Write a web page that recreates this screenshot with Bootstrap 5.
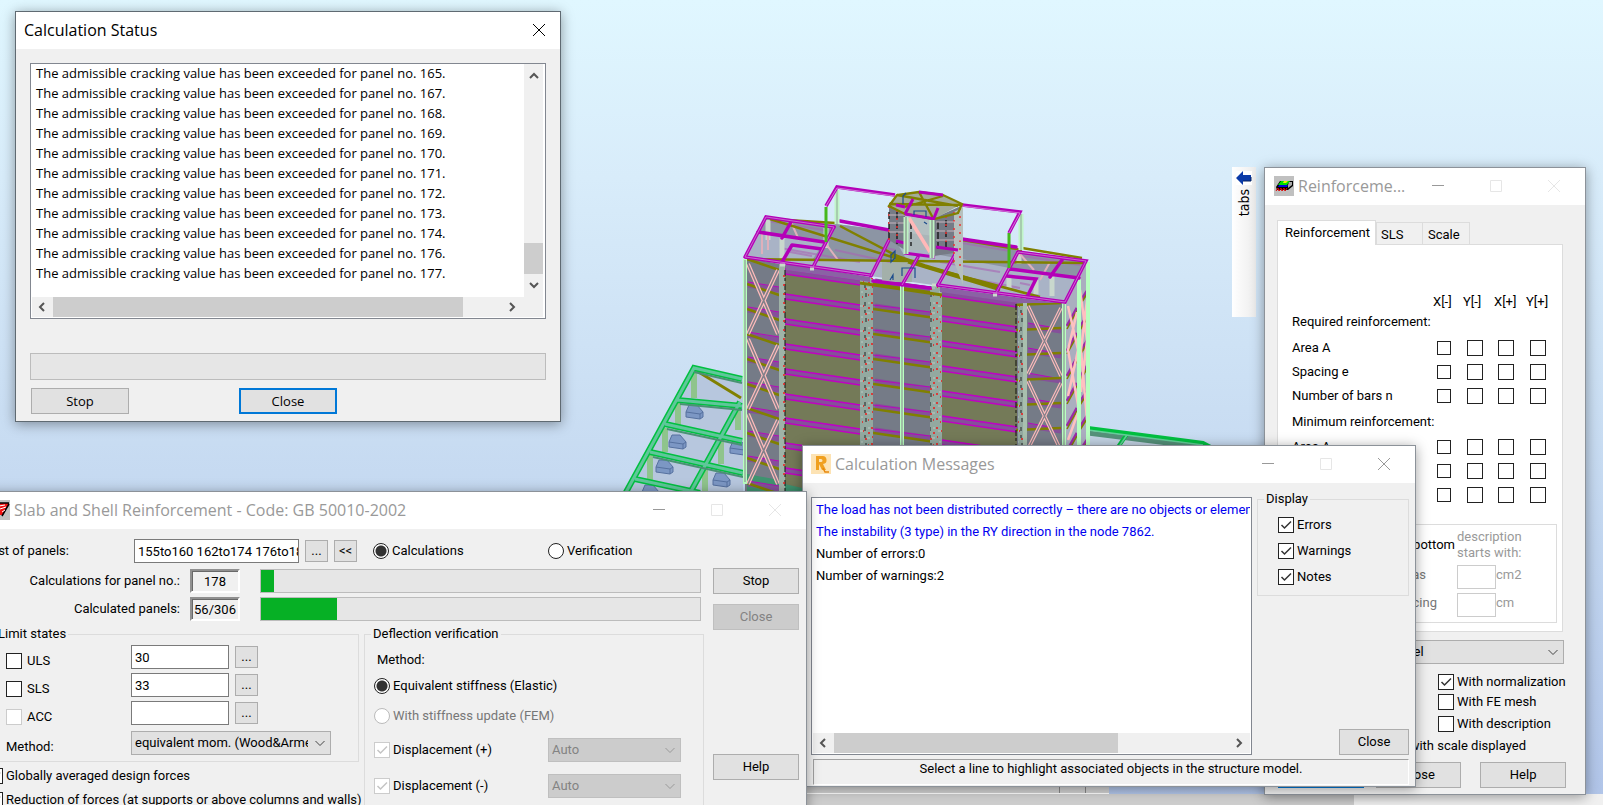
<!DOCTYPE html>
<html lang="en">
<head>
<meta charset="utf-8">
<meta name="viewport" content="width=device-width, initial-scale=1">
<title>Slab and Shell Reinforcement</title>
<link href="https://cdn.jsdelivr.net/npm/bootstrap@5.3.0/dist/css/bootstrap.min.css" rel="stylesheet">
<script src="https://cdn.jsdelivr.net/npm/bootstrap@5.3.0/dist/js/bootstrap.bundle.min.js"></script>
<style>
  :root { --face: #f0f0f0; --btn: #e1e1e1; --edge: #adadad; --soft: #dcdcdc; }
  body { font: 13px/16px Roboto, "Liberation Sans", sans-serif; color: #000; }
  .desktop { height: 100vh; min-height: 600px; background: linear-gradient(#e0f7ff 0%, #d8ecfa 22%, #c8dcf2 55%, #b0c4e8 100%); }
  .model { left: 610px; top: 170px; width: 640px; height: 330px; }

  .win { background: var(--face); border: 1px solid #8c9299; box-shadow: 0 2px 12px rgba(0,0,0,.38); }
  .win-title { height: 37px; padding-bottom: 2px; background: #fff; color: #999; font: 16px/20px "Open Sans", "Noto Sans", sans-serif; }
  .win-title .caption { flex: 1 1 0; min-width: 0; }
  .win-btn { width: 12px; height: 12px; padding: 0; border: 0; background: none; color: #999; display: block; }
  .win-btn svg { display: block; }
  .win-btn:disabled { color: #e6e6e6; }
  .win-btns { gap: 46px; padding-right: 1px; }

  .w-status { left: 15px; top: 11px; width: 546px; font-family: "Open Sans", "Noto Sans", sans-serif; border-color: #5f6a72; }
  .w-status .win-title, .w-status .win-btn { color: #000; }
  .w-status .client { padding: 14px 14px 7px; }
  .w-slab { left: -15px; top: 491px; width: 822px; height: 340px; z-index: 3; }
  .w-msg { left: 802px; top: 445px; width: 614px; height: 342px; z-index: 2; }
  .w-reinf { left: 1264px; top: 167px; width: 322px; height: 628px; z-index: 1; }

  .btn-w { --bs-btn-padding-x: 0; --bs-btn-padding-y: 0; --bs-btn-font-size: 13px; --bs-btn-line-height: 16px;
    --bs-btn-border-radius: 0; --bs-btn-bg: var(--btn); --bs-btn-border-color: var(--edge); --bs-btn-color: #000;
    --bs-btn-hover-bg: #e5f1fb; --bs-btn-hover-border-color: #0078d7; --bs-btn-hover-color: #000;
    --bs-btn-disabled-bg: #ccc; --bs-btn-disabled-border-color: #bfbfbf; --bs-btn-disabled-color: #838383; --bs-btn-disabled-opacity: 1;
    font-family: inherit; height: 26px; }
  .btn-default { border: 2px solid #0078d7; }
  .btn-86 { width: 86px; }
  .btn-98 { width: 98px; }
  .btn-70 { width: 70px; }
  .btn-dots { width: 23px; height: 22px; }

  .sheet { background: #fff; border: 1px solid #828790; }
  .lines { list-style: none; margin: 0; padding: 0; white-space: nowrap; overflow: hidden; }
  .sb { background: var(--face); color: #555; }
  .sb svg { display: block; flex: none; }
  .sb-thumb { background: #cdcdcd; }

  .bar { background: #e6e6e6; border: 1px solid #bcbcbc; border-radius: 0; height: 24px; }
  .bar .progress-bar { background: #06b025; }
  .tall { height: 27px; }

  .form-check-input.tick, .form-check-input.dot { float: none; margin: 0; flex: none; width: 16px; height: 16px; border: 1px solid #222; background-color: #fff; opacity: 1; background-size: 14px 14px; }
  .form-check-input.tick { border-radius: 0; }
  .form-check-input.tick.sm { width: 14px; height: 14px; }
  .form-check-input.tick:checked { background-image: url("data:image/svg+xml,%3Csvg xmlns='http://www.w3.org/2000/svg' viewBox='0 0 14 14'%3E%3Cpath d='M2.5 7l3 3L12 3.500' fill='none' stroke='%23333' stroke-width='1.500'/%3E%3C/svg%3E"); }
  .form-check-input.tick:disabled { border-color: #ccc; opacity: 1; }
  .form-check-input.tick:checked:disabled { background-image: url("data:image/svg+xml,%3Csvg xmlns='http://www.w3.org/2000/svg' viewBox='0 0 14 14'%3E%3Cpath d='M2.5 7l3 3L12 3.500' fill='none' stroke='%23c4c4c4' stroke-width='1.500'/%3E%3C/svg%3E"); }
  .form-check-input.dot:checked { background-image: radial-gradient(circle, #333 5px, transparent 6px); }
  .form-check-input.dot:disabled { border-color: #bbb; }
  .opt { display: flex; align-items: center; gap: 3px; white-space: nowrap; }
  .opt label { opacity: 1 !important; }

  .fld { border: 1px solid #7a7a7a; border-radius: 0; padding: 0 0 0 3px; height: 24px; font: inherit; color: #000; background: #fff; min-width: 0; }
  .fld:disabled { border-color: #ccc; background: #fff; }
  .pick { border: 1px solid var(--edge); border-radius: 0; height: 24px; padding: 0 22px 0 3px; font: inherit; color: #000; background-color: var(--btn); background-size: 10px 10px; background-position: right 5px center; text-overflow: clip; overflow: hidden;
    background-image: url("data:image/svg+xml,%3Csvg xmlns='http://www.w3.org/2000/svg' viewBox='0 0 10 10'%3E%3Cpath d='M.5 3L5 7.500 9.500 3' fill='none' stroke='%23444'/%3E%3C/svg%3E"); }
  .pick:disabled { background-color: #ccc; color: #838383; border-color: #bfbfbf; opacity: 1;
    background-image: url("data:image/svg+xml,%3Csvg xmlns='http://www.w3.org/2000/svg' viewBox='0 0 10 10'%3E%3Cpath d='M.5 3L5 7.500 9.500 3' fill='none' stroke='%23999'/%3E%3C/svg%3E"); }
  .sunk { width: 50px; height: 24px; border: 2px solid; border-color: #909090 #fff #fff #909090; box-shadow: inset 1px 1px #696969; text-align: center; line-height: 22px; }

  .grp { border: 1px solid var(--soft); margin: 0; padding: 0; min-width: 0; }
  .grp legend { float: none; width: auto; margin: 0; padding: 0 2px; font: inherit; line-height: 16px; }
  .limit { width: 368px; margin-left: 5px; height: 136px; }
  .defl { width: 340px; height: 190px; }

  .nav-w { border: 0; margin-left: 12px; align-items: flex-end; }
  .nav-w .nav-link { border: 1px solid var(--soft); border-bottom: 0; border-radius: 0; padding: 4px 0 0 4px; height: 22px; width: 47px; margin: 0; color: #000; background: var(--face); line-height: 16px; text-align: left; }
  .nav-w .nav-link + .nav-link + .nav-link { border-left: 0; padding-left: 5px; }
  .nav-w .nav-link.active { width: 99px; height: 25px; padding-left: 7px; padding-top: 4px; background: #fff; margin-bottom: -1px; position: relative; }
  .pane { width: 286px; height: 388px; margin-left: 12px; background: #fff; border: 1px solid var(--soft); }
  .areas { table-layout: fixed; width: 268px; margin-left: 14px; border-collapse: collapse; }
  .areas th, .areas td { font-weight: 400; padding: 0; vertical-align: middle; white-space: nowrap; text-align: left; height: 24px; }
  .areas .tick { display: block; }
  .desc { width: 276px; height: 99px; margin-left: 3px; border: 1px solid var(--soft); color: #999; }
  .desc-grid { display: grid; grid-template-columns: 175px 39px 1fr; align-items: center; }
  .dim { color: #777; }

  .strip { left: 1232px; top: 167px; width: 24px; height: 150px; background: linear-gradient(90deg, #fff, #ececec); }
  .strip a { writing-mode: vertical-rl; transform: rotate(180deg); color: #000; text-decoration: none; font: 14px/20px "DejaVu Sans Condensed", Roboto, sans-serif; }
  .strip svg { display: block; background: #fff; }

  .footbar { height: 11px; background: #f0f0f0; }
  .footbar .sb-thumb { width: 1354px; }
  .views { left: 0; bottom: 11px; width: 1109px; height: 22px; background: #d2d2d2; border-bottom: 1px solid #fff; padding-left: 808px; }
  .views span { width: 252px; border-right: 1px solid #888; line-height: 16px; }
  .views i { width: 26px; border-right: 1px solid #888; }
</style>
</head>
<body>
<main class="desktop position-relative overflow-hidden">

  <!-- structure model -->
  <svg class="model position-absolute" viewBox="610 170 640 330" aria-label="Structure model view">
    <defs>
      <pattern id="mesh" width="13" height="25" patternUnits="userSpaceOnUse">
        <rect width="13" height="25" fill="#93a9a0"/>
        <path d="M0 3h2M5 6h1M10 8h2M1 12h1M7 14h2M0 19h2M4 22h1M10 20h1" stroke="#f01818" stroke-width="1.300"/>
        <path d="M7 2v4M7 10v3M8 18v4" stroke="#222"/>
        <path d="M2 6h3M9 13h3M3 17h2M10 3h2" stroke="#bccac2"/>
      </pattern>
      <g id="ix" fill="none">
        <path d="M748 264L778 334M778 270L748 334" stroke="#ffbcbc" stroke-width="4"/>
        <path d="M748 264L778 334M778 270L748 334" stroke="#83808a" stroke-width="1.600"/>
      </g>
      <g id="ix2" fill="none">
        <path d="M1028 306L1061 376M1061 308L1028 374" stroke="#ffbcbc" stroke-width="3.500"/>
        <path d="M1028 306L1061 376M1061 308L1028 374" stroke="#83808a" stroke-width="1.300"/>
      </g>
      <g id="pur">
        <path d="M748 285L779 290M875 281L930 289M1028 326L1061 331" stroke="#85509a" stroke-width="5"/>
        <path d="M748 282L779 287M873 280L930 287M1028 323L1061 329" stroke="#b808bc" stroke-width="1"/>
        <path d="M785 271L860 282M942 293L1017 304" stroke="#85509a" stroke-width="5"/>
        <path d="M785 269L860 280M785 274L860 285M942 291L1017 302M942 296L1017 307" stroke="#c000c4" stroke-width="1.300"/>
        <path d="M747 259L779 270 785 271M860 282L942 294M1016 305L1061 303" stroke="#808000" stroke-width="2.600" fill="none"/>
        <path d="M1067 326L1077 308M1080 302L1087 291" stroke="#9a2ca6" stroke-width="3"/>
        <path d="M1067 329L1077 311M1080 305L1087 294" stroke="#808000" stroke-width="1.500"/>
        <path d="M743 259h4M1062 304h4" stroke="#fff" stroke-width="1"/>
      </g>
      <g id="foot">
        <path d="M-8 0l3-7h8l6 7v5l-3 2-14-2z" fill="#7c97c4" stroke="#56719f"/>
        <path d="M-8 0l14 2 3-2M6 2v5" fill="none" stroke="#56719f"/>
      </g>
    </defs>

    <!-- podium, left side -->
    <path d="M694 367L743 378V500H622z" fill="#b7c7de"/>
    <g stroke="#8fc48c" stroke-width="6">
      <path d="M694 370v28M678 402v28M665 428v24M650 454v26M738 408v22M721 440v24M705 470v26"/>
    </g>
    <use href="#foot" x="694" y="412"/><use href="#foot" x="677" y="442"/><use href="#foot" x="664" y="467"/>
    <use href="#foot" x="738" y="448"/><use href="#foot" x="721" y="480"/><use href="#foot" x="650" y="492"/>
    <path d="M697 371L741 398" stroke="#808000" stroke-width="3"/>
    <g fill="none">
      <path d="M742 379L694 368L625 494M677 400L742 406M665 424L742 441M650 452L743 473M635 479L700 493M740 402L690 493" stroke="#00c040" stroke-width="6"/>
      <path d="M742 379L694 368L625 494M677 400L742 406M665 424L742 441M650 452L743 473M635 479L700 493M740 402L690 493" stroke="#5fc79a" stroke-width="3"/>
      <path d="M694 372L742 383M680 404L742 410M667 429L742 445M653 457L743 477" stroke="#4a9274" stroke-width="2"/>
    </g>

    <!-- podium, right side -->
    <path d="M1088 428L1203 443 1225 455H1088z" fill="#c3d3e4"/>
    <path d="M1088 433L1200 447" stroke="#55917a" stroke-width="5"/>
    <path d="M1088 428L1203 443 1222 453M1127 434L1116 450" stroke="#00c040" stroke-width="4" fill="none"/>
    <path d="M1088 430L1203 445M1127 435L1118 448" stroke="#63cf99" stroke-width="1.500"/>

    <!-- facade -->
    <path d="M745 257L860 280 942 290 1017 302H1065V500H745z" fill="#757b87"/>
    <path d="M785 270L860 281V500H785zM942 292L1017 303V500H942z" fill="#747a58"/>
    <path d="M1065 302L1087 262V500H1065z" fill="#aaaebf"/>
    <path d="M747 474L779 480V500H747z" fill="#3f9470"/>
    <path d="M785 484L802 488V500H785z" fill="#3f9470"/>
    <use href="#pur"/><use href="#pur" y="25"/><use href="#pur" y="50"/><use href="#pur" y="75"/><use href="#pur" y="100"/>
    <use href="#pur" y="125"/><use href="#pur" y="149"/><use href="#pur" y="174"/><use href="#pur" y="199"/><use href="#pur" y="224"/>
    <use href="#ix"/><use href="#ix" y="75"/><use href="#ix" y="150"/>
    <use href="#ix2"/><use href="#ix2" y="75"/><use href="#ix2" y="150"/>
    <path d="M779 266h6V500h-6z" fill="#9fb3a7"/>
    <path d="M785 270V500M1016 304V500" stroke="#111" stroke-width="1" stroke-dasharray="6 2 3 3"/>
    <path d="M784 275V500M1022 306V500M1019 312V500" stroke="#f02020" stroke-width="1.500" stroke-dasharray="2 7"/>
    <path d="M860 278h13V500h-13zM930 286h12V500h-12z" fill="url(#mesh)"/>
    <path d="M1018 306h5V500h-5z" fill="url(#mesh)"/>
    <path d="M1023 300h4V500h-4z" fill="#a8bfae"/>
    <path d="M860 283L942 295" stroke="#808000" stroke-width="3"/>
    <g stroke="#ffc0c0" stroke-width="2.500" fill="none">
      <path d="M1068 306L1078 350 1068 396M1077 312L1068 350 1079 410 1068 440M1080 290L1087 340 1081 392M1087 300L1081 350 1087 420"/>
    </g>
    <g stroke="#b8ffc0" stroke-width="4">
      <path d="M745 259V484M902 286V500M1064 303V500M1079 278V500M1088 262V500"/>
    </g>
    <path d="M745 260V482M902 287V500M1064 304V500" stroke="#9fc0a6" stroke-width="2"/>

    <!-- roof -->
    <path d="M745 257L766 217 836 224 890 231 962 239 1018 252 1086 261 1065 302 1010 296 870 276z" fill="#a9b3c6"/>
    <path d="M758 233L766 217 836 226 826 243zM836 224L890 231 908 262 813 259zM962 239L1018 250 1010 268 940 255zM1018 252L1086 261 1077 278 1010 270z" fill="#8c95a4"/>
    <path d="M882 262h30v20h-30z" fill="#a3b0aa"/>
    <path d="M786 263L870 277 870 282 786 270zM940 287L1060 303 1018 303 940 292z" fill="#8a62a4"/>
    <g stroke="#a864b4" stroke-width="2" opacity=".6">
      <path d="M780 248L860 262M835 250L890 262M940 262L1000 272M946 274L1020 288M880 247L895 250M768 221L830 231M962 243L1010 251M1022 256L1080 265M790 252L812 256M1020 283L1030 285"/>
    </g>
    <g stroke="#c9d8cd" stroke-width="5">
      <path d="M782 238v28M826 228v20M1052 276v20M1019 250v14M1036 280v14M768 220v20M1009 276v12"/>
    </g>
    <g stroke="#dfb0bb" stroke-width="2"><path d="M762 234v20M768 232v18M791 222l8 18M826 244l12 16M1020 254l14 16M1050 262l-10 18"/></g>
    <g stroke="#808000" stroke-width="2.500" fill="none">
      <path d="M747 259L1086 263M770 219L836 223M770 219L908 262M840 226L912 264M1022 248L1082 258M962 240L1022 250"/>
      <path d="M908 262L1040 297M908 262L1000 290"/>
    </g>
    <path d="M890 254L925 266 1000 288" stroke="#808000" stroke-width="3.500" fill="none"/>
    <g fill="none" stroke="#b400b8" stroke-width="3.500" stroke-linecap="round">
      <path d="M745 257L766 217 834 227M745 257L870 275M873 281L930 288M938 285L1065 302 1086 261 1018 252"/>
      <path d="M758 232L824 242M791 222L782 238M834 227L813 267M792 245L782 262M792 245L822 249M889 240L871 276M918 257L902 285M958 249L938 285"/>
      <path d="M1018 252L996 293M1010 269L1079 278M1062 260L1050 277M1007 276L1036 279 1027 297M840 221L889 230M962 239L1016 247"/>
    </g>
    <g fill="none" stroke="#c868d0" stroke-width="1">
      <path d="M745 257L766 217 834 227M745 257L870 275M938 285L1065 302 1086 261 1018 252M889 240L871 276M918 257L902 285M958 249L938 285M834 227L813 267M1018 252L996 293"/>
    </g>
    <path d="M780 265h5M810 269h4M932 285h4M993 295h4" stroke="#c9dccb" stroke-width="3"/>

    <!-- roof frames -->
    <path d="M837 190V224M1021 214V250" stroke="#c0f5c8" stroke-width="5"/>
    <path d="M837 190V224M1021 214V250" stroke="#9fc0a6" stroke-width="1.500"/>
    <path d="M826 207V242M1009 233V268" stroke="#45b81c" stroke-width="3"/>
    <path d="M826 206L837 187 895 195M962 205L1020 212 1009 233" fill="none" stroke="#b400b8" stroke-width="3.500"/>
    <path d="M826 206L837 188 895 196M962 206L1020 213 1009 233" fill="none" stroke="#cf78d6" stroke-width="1"/>

    <!-- stair tower -->
    <path d="M889 205L905 213V250L889 240zM934 218L961 206V252L934 256z" fill="#767b86"/>
    <path d="M905 200H934V250H905z" fill="#aab5b4" opacity=".8"/>
    <path d="M889 205L897 195 919 192 943 195 962 204 934 219 905 214z" fill="#a3ab9a"/>
    <path d="M954 212L963 207V285L954 262z" fill="#b5c0bd"/>
    <path d="M889 212V240M897 212V244M911 222V246M938 222V250M946 220V248" stroke="#111" stroke-width="1.300" stroke-dasharray="7 3"/>
    <path d="M889 206V242M897 210V240M954 212V262M960 208V270M946 216V252" stroke="#f03030" stroke-width="1.500" stroke-dasharray="2 6"/>
    <path d="M889 215h16M889 223h16M889 232h16M936 222h26M936 231h26M936 240h26" stroke="#c7b6be"/>
    <path d="M889 206L897 195 919 192 943 195 962 204 958 213 934 219 905 214zM897 195L958 206M889 204L962 205M919 192L933 218M943 196L905 207" fill="none" stroke="#808000" stroke-width="2.300"/>
    <path d="M919 192L943 195M896 205L905 207M905 214L935 219M913 199L905 214M938 208L934 218M896 241L905 243M904 253L935 257M936 247L958 250" stroke="#b400b8" stroke-width="3"/>
    <path d="M909 218L930 252" stroke="#ffb8b8" stroke-width="3.500"/>
    <path d="M906 217V254M932 220V258" stroke="#bdf2c4" stroke-width="5"/>
    <path d="M906 217V254M932 220V258" stroke="#9bb5a0" stroke-width="2"/>
    <path d="M914 215v-4h12v6M924 222l3 2M903 204v-8l3-3M891 262v-7l4-4v7zM902 276v-8h13v10M890 280l3-5v5" fill="none" stroke="#1c4c8c" stroke-width="1.200"/>
  </svg>

  <!-- docked tab strip -->
  <aside class="strip position-absolute d-flex flex-column align-items-center pt-1">
    <svg width="16" height="14" viewBox="0 0 16 14"><path d="M0 7L7 0v4h8v6H7v4z" fill="#0a3aa8"/><path d="M7 10h8V6" fill="none" stroke="#04205f"/></svg>
    <a href="#" class="mt-1">tabs</a>
  </aside>

  <!-- view names and the scroll bar under the model -->
  <div class="views position-absolute d-flex"><span>m - Story 2</span><i></i></div>
  <div class="footbar position-absolute bottom-0 start-0 w-100 d-flex"><div class="sb-thumb"></div></div>

  <!-- Calculation Status -->
  <section class="win w-status position-absolute">
    <header class="win-title d-flex align-items-center ps-2">
      <span class="caption">Calculation Status</span>
      <button class="win-btn" aria-label="Close" style="margin-right:15px"><svg width="12" height="12" viewBox="0 0 12 12"><path d="M0 0l12 12M12 0L0 12" stroke="currentColor"/></svg></button>
    </header>
    <div class="client d-flex flex-column">
      <div class="sheet d-flex flex-column" style="height:256px;padding:0 2px 1px 1px">
        <div class="d-flex flex-fill">
          <ul class="lines flex-fill" id="cracks" style="padding-left:4px;margin-top:-1px;line-height:20px"></ul>
          <div class="sb d-flex flex-column align-items-center justify-content-between" style="width:19px;padding:8px 0">
            <svg width="10" height="7" viewBox="0 0 10 7"><path d="M1 6l4-4 4 4" fill="none" stroke="currentColor" stroke-width="2"/></svg>
            <div class="sb-thumb w-100 mt-auto mb-2" style="height:31px"></div>
            <svg width="10" height="7" viewBox="0 0 10 7"><path d="M1 1l4 4 4-4" fill="none" stroke="currentColor" stroke-width="2"/></svg>
          </div>
        </div>
        <div class="sb d-flex align-items-center" style="height:20px;padding:0 27px 0 6px">
          <svg width="7" height="10" viewBox="0 0 7 10"><path d="M6 1L2 5l4 4" fill="none" stroke="currentColor" stroke-width="2"/></svg>
          <div class="sb-thumb h-100 ms-2" style="width:410px"></div>
          <svg class="ms-auto" width="7" height="10" viewBox="0 0 7 10"><path d="M1 1l4 4-4 4" fill="none" stroke="currentColor" stroke-width="2"/></svg>
        </div>
      </div>
      <div class="progress bar tall" style="margin-top:34px" role="progressbar" aria-label="Calculation progress"></div>
      <div class="d-flex mt-2" style="gap:110px;padding-left:1px">
        <button class="btn btn-w btn-98">Stop</button>
        <button class="btn btn-w btn-98 btn-default">Close</button>
      </div>
    </div>
  </section>

  <!-- Slab and Shell Reinforcement -->
  <section class="win w-slab position-absolute">
    <header class="win-title d-flex align-items-center pe-4">
      <svg class="ms-1 me-1" width="20" height="20" viewBox="0 0 20 20"><rect width="20" height="20" fill="#c0c0c0"/><path d="M3 3h16l-6 12H2z" fill="#f01010"/><path d="M2 3h17M19 4l-7 12" stroke="#000" stroke-width="1.500"/><path d="M9 6l6-1M10 9l6-2M12 12l3-2" stroke="#fff"/></svg>
      <span class="caption">Slab and Shell Reinforcement - Code: GB 50010-2002</span>
      <div class="win-btns d-flex">
        <button class="win-btn" aria-label="Minimize"><svg width="12" height="12" viewBox="0 0 12 12"><path d="M0 5.500h12" stroke="currentColor"/></svg></button>
        <button class="win-btn" aria-label="Maximize" disabled><svg width="12" height="12" viewBox="0 0 12 12"><path d="M.5.5h11v11H.5z" fill="none" stroke="currentColor"/></svg></button>
        <button class="win-btn" aria-label="Close" disabled><svg width="12" height="12" viewBox="0 0 12 12"><path d="M0 0l12 12M12 0L0 12" stroke="currentColor"/></svg></button>
      </div>
    </header>
    <div class="d-flex">
      <div style="width:718px;padding-top:9px">
        <div class="d-flex align-items-center text-nowrap" style="height:26px;gap:6px">
          <label for="panels" style="width:142px;padding-left:2px">List of panels:</label>
          <input id="panels" class="fld" style="width:165px" value="155to160 162to174 176to180">
          <button class="btn btn-w btn-dots">...</button>
          <button class="btn btn-w btn-dots">&lt;&lt;</button>
          <div class="opt" style="width:169px;margin-left:10px"><input class="form-check-input dot" type="radio" name="mode" id="m1" checked><label for="m1">Calculations</label></div>
          <div class="opt"><input class="form-check-input dot" type="radio" name="mode" id="m2"><label for="m2">Verification</label></div>
        </div>
        <div class="d-flex flex-column gap-1" style="padding-top:5px">
          <div class="d-flex align-items-center">
            <span class="text-end" style="width:194px">Calculations for panel no.:</span>
            <output class="sunk" style="margin:0 20px 0 10px">178</output>
            <div class="progress bar" style="width:441px" role="progressbar" aria-label="Current panel"><div class="progress-bar" style="width:3%"></div></div>
          </div>
          <div class="d-flex align-items-center">
            <span class="text-end" style="width:194px">Calculated panels:</span>
            <output class="sunk" style="margin:0 20px 0 10px">56/306</output>
            <div class="progress bar" style="width:441px" role="progressbar" aria-label="Calculated panels"><div class="progress-bar" style="width:17.3%"></div></div>
          </div>
        </div>
        <div class="d-flex" style="margin-top:5px;gap:5px">
          <div style="width:373px">
            <fieldset class="grp limit">
              <legend class="ms-1">Limit states</legend>
              <div class="d-flex flex-column gap-1" style="padding:3px 0 0 14px">
                <div class="d-flex align-items-end">
                  <div class="opt" style="width:125px;gap:5px"><input class="form-check-input tick" type="checkbox" id="uls"><label for="uls">ULS</label></div>
                  <input class="fld" style="width:98px" value="30" aria-label="ULS cases"><button class="btn btn-w btn-dots align-self-center" style="margin-left:6px">...</button>
                </div>
                <div class="d-flex align-items-end">
                  <div class="opt" style="width:125px;gap:5px"><input class="form-check-input tick" type="checkbox" id="sls"><label for="sls">SLS</label></div>
                  <input class="fld" style="width:98px" value="33" aria-label="SLS cases"><button class="btn btn-w btn-dots align-self-center" style="margin-left:6px">...</button>
                </div>
                <div class="d-flex align-items-end">
                  <div class="opt" style="width:125px;gap:5px"><input class="form-check-input tick" type="checkbox" id="acc" disabled><label for="acc">ACC</label></div>
                  <input class="fld" style="width:98px" aria-label="ACC cases"><button class="btn btn-w btn-dots align-self-center" style="margin-left:6px">...</button>
                </div>
                <div class="d-flex align-items-end" style="margin-top:2px">
                  <label for="meth" style="width:125px">Method:</label>
                  <select id="meth" class="form-select pick" style="width:200px"><option>equivalent mom. (Wood&amp;Armer)</option></select>
                </div>
              </div>
            </fieldset>
            <div class="d-flex flex-column gap-2" style="padding:6px 0 0 1px">
              <div class="opt"><input class="form-check-input tick" type="checkbox" id="glob" checked><label for="glob">Globally averaged design forces</label></div>
              <div class="opt"><input class="form-check-input tick" type="checkbox" id="red" checked><label for="red">Reduction of forces (at supports or above columns and walls)</label></div>
            </div>
          </div>
          <fieldset class="grp defl">
            <legend style="margin-left:6px">Deflection verification</legend>
            <div style="padding:10px 22px 0 9px">
              <div style="margin-left:3px">Method:</div>
              <div class="opt" style="margin-top:10px"><input class="form-check-input dot" type="radio" name="defl" id="d1" checked><label for="d1">Equivalent stiffness (Elastic)</label></div>
              <div class="opt dim" style="margin-top:14px"><input class="form-check-input dot" type="radio" name="defl" id="d2" disabled><label for="d2">With stiffness update (FEM)</label></div>
              <div class="d-flex align-items-center justify-content-between" style="margin-top:14px">
                <div class="opt"><input class="form-check-input tick" type="checkbox" id="dp" checked disabled><label for="dp">Displacement (+)</label></div>
                <select class="form-select pick" style="width:133px" disabled aria-label="Displacement (+) limit"><option>Auto</option></select>
              </div>
              <div class="d-flex align-items-center justify-content-between" style="margin-top:12px">
                <div class="opt"><input class="form-check-input tick" type="checkbox" id="dm" checked disabled><label for="dm">Displacement (-)</label></div>
                <select class="form-select pick" style="width:133px" disabled aria-label="Displacement (-) limit"><option>Auto</option></select>
              </div>
            </div>
          </fieldset>
        </div>
      </div>
      <div class="d-flex flex-column" style="padding:39px 0 0 9px;gap:10px">
        <button class="btn btn-w btn-86">Stop</button>
        <button class="btn btn-w btn-86" disabled>Close</button>
        <button class="btn btn-w btn-86" style="margin-top:114px">Help</button>
      </div>
    </div>
  </section>

  <!-- Calculation Messages -->
  <section class="win w-msg position-absolute">
    <header class="win-title d-flex align-items-center ps-2 pe-4">
      <svg class="me-1" width="20" height="20" viewBox="0 0 20 20"><rect width="20" height="20" fill="#fde3b4"/><path d="M5 2h6a4 4 0 0 1 1 8l3 6h-4l-3-6v6H5zM8 5v3h2a1.500 1.500 0 0 0 0-3z" fill="#f0a020" fill-rule="evenodd"/><path d="M12 14l2 4h4" fill="none" stroke="#e8880c" stroke-width="1.500"/></svg>
      <span class="caption">Calculation Messages</span>
      <div class="win-btns d-flex">
        <button class="win-btn" aria-label="Minimize"><svg width="12" height="12" viewBox="0 0 12 12"><path d="M0 5.500h12" stroke="currentColor"/></svg></button>
        <button class="win-btn" aria-label="Maximize" disabled><svg width="12" height="12" viewBox="0 0 12 12"><path d="M.5.5h11v11H.5z" fill="none" stroke="currentColor"/></svg></button>
        <button class="win-btn" aria-label="Close"><svg width="12" height="12" viewBox="0 0 12 12"><path d="M0 0l12 12M12 0L0 12" stroke="currentColor"/></svg></button>
      </div>
    </header>
    <div class="d-flex" style="padding:14px 6px 0 8px;gap:5px">
      <div class="sheet d-flex flex-column" style="width:441px;height:258px;padding:1px">
        <ul class="lines flex-fill" style="padding:0 0 0 3px;line-height:22px">
          <li style="color:#0000f0">The load has not been distributed correctly – there are no objects or elements under the load</li>
          <li style="color:#0000f0">The instability (3 type) in the RY direction in the node 7862.</li>
          <li>Number of errors:0</li>
          <li>Number of warnings:2</li>
        </ul>
        <div class="sb d-flex align-items-center" style="height:20px;padding:0 7px 0 6px">
          <svg width="7" height="10" viewBox="0 0 7 10"><path d="M6 1L2 5l4 4" fill="none" stroke="currentColor" stroke-width="2"/></svg>
          <div class="sb-thumb h-100 ms-2" style="width:284px"></div>
          <svg class="ms-auto" width="7" height="10" viewBox="0 0 7 10"><path d="M1 1l4 4-4 4" fill="none" stroke="currentColor" stroke-width="2"/></svg>
        </div>
      </div>
      <div class="d-flex flex-column flex-fill" style="margin-top:-6px">
        <fieldset class="grp" style="height:105px">
          <legend style="margin-left:6px">Display</legend>
          <div class="d-flex flex-column" style="padding:10px 0 0 20px;gap:10px">
            <div class="opt"><input class="form-check-input tick" type="checkbox" id="er" checked><label for="er">Errors</label></div>
            <div class="opt"><input class="form-check-input tick" type="checkbox" id="wa" checked><label for="wa">Warnings</label></div>
            <div class="opt"><input class="form-check-input tick" type="checkbox" id="no" checked><label for="no">Notes</label></div>
          </div>
        </fieldset>
        <button class="btn btn-w btn-70 mt-auto ms-auto">Close</button>
      </div>
    </div>
    <div class="text-center" style="margin:4px 6px 0 10px;height:26px;line-height:18px;border:1px solid;border-color:#a0a0a0 #fff #fff #a0a0a0">Select a line to highlight associated objects in the structure model.</div>
  </section>

  <!-- Reinforcement maps -->
  <section class="win w-reinf position-absolute">
    <header class="win-title d-flex align-items-center pe-4" style="padding-left:9px">
      <svg class="me-1" width="20" height="20" viewBox="0 0 20 20"><rect width="20" height="20" fill="#c0c0c0"/><path d="M2 11l4-6h13v5l-5 4H3z" fill="#000"/><path d="M7 5h9l-3 4H4z" fill="#00e000"/><path d="M10 5h4l-2 2h-3z" fill="#f0f000"/><path d="M5 9h9l-1 2H4z" fill="#0000e0"/><path d="M15 6h3v3l-4 3v-3z" fill="#aaa"/><path d="M2 15l2-3 1 3 2-3 1 3 2-3 1 3 2-3" fill="none" stroke="#e00000" stroke-width="1"/></svg>
      <span class="caption">Reinforceme...</span>
      <div class="win-btns d-flex">
        <button class="win-btn" aria-label="Minimize"><svg width="12" height="12" viewBox="0 0 12 12"><path d="M0 5.500h12" stroke="currentColor"/></svg></button>
        <button class="win-btn" aria-label="Maximize" disabled><svg width="12" height="12" viewBox="0 0 12 12"><path d="M.5.5h11v11H.5z" fill="none" stroke="currentColor"/></svg></button>
        <button class="win-btn" aria-label="Close" disabled><svg width="12" height="12" viewBox="0 0 12 12"><path d="M0 0l12 12M12 0L0 12" stroke="currentColor"/></svg></button>
      </div>
    </header>
    <nav class="nav nav-w" style="padding-top:15px">
      <a class="nav-link active" href="#">Reinforcement</a>
      <a class="nav-link" href="#">SLS</a>
      <a class="nav-link" href="#">Scale</a>
    </nav>
    <div class="pane">
      <table class="areas" style="margin-top:45px">
        <colgroup><col style="width:141px"><col style="width:30px"><col style="width:31px"><col style="width:32px"><col style="width:34px"></colgroup>
        <thead><tr><td></td><th>X[-]</th><th>Y[-]</th><th>X[+]</th><th>Y[+]</th></tr></thead>
        <tbody id="areas"></tbody>
      </table>
      <div class="desc" style="margin-top:17px">
        <div class="desc-grid">
          <span class="text-end text-black" style="padding-right:2px;padding-top:3px">Top/bottom</span>
          <span style="grid-column:span 2;padding-top:4px">description<br>starts with:</span>
          <label for="ar" class="text-end dim" style="padding-right:31px">Areas</label><input id="ar" class="fld" style="margin-top:4px" disabled><span>cm2</span>
          <label for="sp" class="text-end dim" style="padding-right:20px">Spacing</label><input id="sp" class="fld" style="margin-top:4px" disabled><span>cm</span>
        </div>
      </div>
    </div>
    <div style="padding:8px 19px 0 12px">
      <select class="form-select pick" style="padding-left:114px;width:287px" aria-label="Panel"><option>panel</option></select>
      <div style="padding:10px 0 0 161px">
        <div class="opt"><input class="form-check-input tick" type="checkbox" id="wn" checked><label for="wn">With normalization</label></div>
        <div class="opt mt-1"><input class="form-check-input tick" type="checkbox" id="wf"><label for="wf">With FE mesh</label></div>
        <div class="opt" style="margin-top:6px"><input class="form-check-input tick" type="checkbox" id="wd"><label for="wd">With description</label></div>
      </div>
      <div class="text-end text-nowrap" style="padding:6px 40px 0 0">New window with scale displayed</div>
      <div class="d-flex" style="margin-top:8px;gap:12px;padding-left:1px">
        <button class="btn btn-w btn-86 btn-default">Apply</button>
        <button class="btn btn-w btn-86">Close</button>
        <button class="btn btn-w btn-86" style="margin-left:7px">Help</button>
      </div>
    </div>
  </section>
</main>

<script>
  // panels whose cracking value is over the limit
  document.getElementById('cracks').innerHTML = [165,167,168,169,170,171,172,173,174,176,177]
    .map(n => `<li>The admissible cracking value has been exceeded for panel no. ${n}.</li>`).join('');

  // required / minimum reinforcement, four directions each
  const rows = ['Area A', 'Spacing e', 'Number of bars n'], dirs = ['X[-]', 'Y[-]', 'X[+]', 'Y[+]'];
  document.getElementById('areas').innerHTML = ['Required', 'Minimum'].map((g, k) =>
    `<tr><th colspan="5" style="height:${k ? 27 : 14}px">${g} reinforcement:</th></tr>` +
    (k ? '' : '<tr style="height:6px"></tr>') +
    rows.map(r => `<tr><th>${r}</th>` + dirs.map((d, i) =>
      `<td style="padding-left:4px"><input type="checkbox" class="form-check-input tick${i ? '' : ' sm'}" aria-label="${g} ${r} ${d}"></td>`).join('') + '</tr>').join('')
  ).join('');
</script>
</body>
</html>
